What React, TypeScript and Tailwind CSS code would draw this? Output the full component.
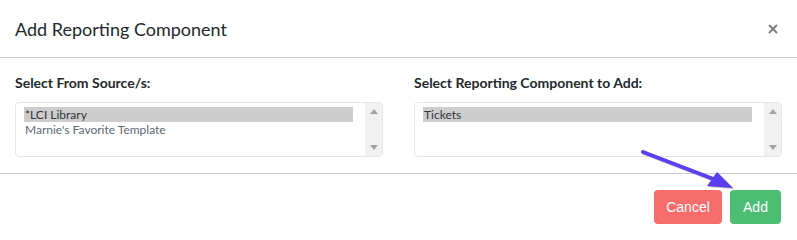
import React from "react";

const sources = ["*LCI Library", "Marnie's Favorite Template"];
const components = ["Tickets"];

function ListBox({ items, selected }: { items: string[]; selected: number }) {
  return (
    <div className="flex h-[55px] overflow-hidden rounded-[4px] border border-[#e4e7ea] bg-white">
      <div className="flex-1 pl-[8px] pr-[12px] pt-[4px]">
        {items.map((item, i) => (
          <div
            key={item}
            className={
              i === selected
                ? "h-[15px] bg-[#cdcdcd] pl-[1px] text-[12px] leading-[15px] text-[#2f353a]"
                : "h-[15px] pl-[1px] text-[12px] leading-[15px] text-[#5c6873]"
            }
          >
            {item}
          </div>
        ))}
      </div>
      <div className="flex w-[17px] flex-col items-center justify-between bg-[#f1f1f1] py-[6px]">
        <svg width="8" height="5" viewBox="0 0 8 5">
          <path d="M0 5 L4 0 L8 5 Z" fill="#a3a3a3" />
        </svg>
        <svg width="8" height="5" viewBox="0 0 8 5">
          <path d="M0 0 L4 5 L8 0 Z" fill="#a3a3a3" />
        </svg>
      </div>
    </div>
  );
}

export default function App() {
  return (
    <div
      className="relative h-[240px] w-[797px] overflow-hidden bg-white"
      style={{ fontFamily: "Lato, 'Noto Sans', sans-serif" }}
    >
      <div className="flex h-[58px] items-center justify-between border-b border-[#c8ced3] pl-[15px] pr-[19px]">
        <h5 className="text-[18px] leading-[22px] text-[#23282c]">Add Reporting Component</h5>
        <svg width="10" height="10" viewBox="0 0 10 10" className="mt-[1px]">
          <path d="M1 1 L9 9 M9 1 L1 9" stroke="#7d7d7d" strokeWidth="2" />
        </svg>
      </div>

      <div className="grid grid-cols-2 gap-[31px] px-[15px] pb-[16px] pt-[14px]">
        <div>
          <label className="mb-[9px] block text-[14px] font-bold leading-[21px] text-[#23282c]">
            Select From Source/s:
          </label>
          <ListBox items={sources} selected={0} />
        </div>
        <div>
          <label className="mb-[9px] block text-[14px] font-bold leading-[21px] text-[#23282c]">
            Select Reporting Component to Add:
          </label>
          <ListBox items={components} selected={0} />
        </div>
      </div>

      <div
        className="flex justify-end gap-[8px] border-t border-[#c8ced3] px-[16px] pt-[16px]"
        style={{ fontFamily: "'Liberation Sans', Arial, sans-serif" }}
      >
        <button className="h-[34px] w-[68px] rounded-[4px] bg-[#f86c6b] text-[14px] text-white">
          Cancel
        </button>
        <button className="h-[34px] w-[51px] rounded-[4px] bg-[#4dbd74] text-[14px] text-white">
          Add
        </button>
      </div>

      <svg
        className="pointer-events-none absolute left-0 top-0"
        width="797"
        height="240"
        viewBox="0 0 797 240"
      >
        <g transform="translate(1 1)" opacity="0.25">
          <path d="M643 152 L716 180" stroke="#000" strokeWidth="4" strokeLinecap="round" />
          <path d="M717 172 L733 188 L707 186 Z" fill="#000" />
        </g>
        <path d="M643 152 L716 180" stroke="#5a3ff0" strokeWidth="4" strokeLinecap="round" />
        <path d="M717 172 L733 188 L707 186 Z" fill="#5a3ff0" />
      </svg>
    </div>
  );
}
